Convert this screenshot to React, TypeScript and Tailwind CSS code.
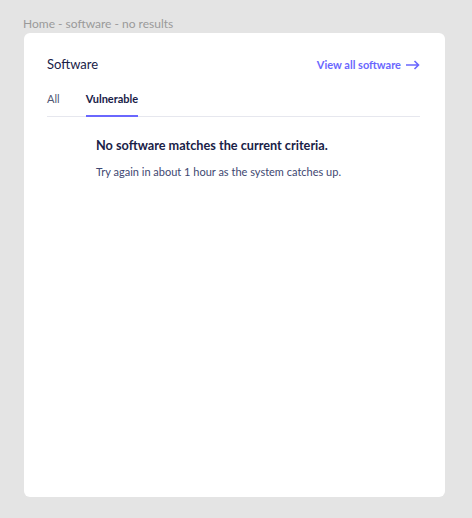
const font = { fontFamily: '"Lato", "Open Sans", sans-serif' };

const App = () => {
  return (
    <div className="w-[472px] h-[518px] bg-[#e4e4e4] pt-[15px]" style={font}>
      <p className="ml-[23px] text-[12px] leading-[18px] text-[#9a9a9a]">Home - software - no results</p>
      <div className="ml-[24px] w-[421px] h-[464px] bg-white rounded-[6px] pl-[23px] pr-[25px] pt-[23px]">
        <div className="flex items-center justify-between h-[18px]">
          <h2 className="text-[13px] text-[#192147]">Software</h2>
          <a className="flex items-center gap-[5px] text-[11px] font-bold text-[#6a67fe]">
            View all software
            <svg width="14" height="10" viewBox="0 0 14 10" fill="none" stroke="#6a67fe" strokeWidth="1.6">
              <path d="M0 5h12.5M8.5 1l4 4-4 4" />
            </svg>
          </a>
        </div>
        <div className="mt-[17px] flex gap-[26px] border-b border-[#e6e7ee] text-[11px]">
          <span className="pb-[7px] text-[#515774]">All</span>
          <span className="pb-[7px] font-bold text-[#192147] border-b-2 border-[#6a67fe] -mb-px">Vulnerable</span>
        </div>
        <div className="pl-[49px] pt-[19px]">
          <h3 className="text-[12.7px] font-bold text-[#192147] leading-[18px]">No software matches the current criteria.</h3>
          <p className="mt-[10px] text-[11px] text-[#3e4771] leading-[16px]">Try again in about 1 hour as the system catches up.</p>
        </div>
      </div>
    </div>
  );
};

export default App;
